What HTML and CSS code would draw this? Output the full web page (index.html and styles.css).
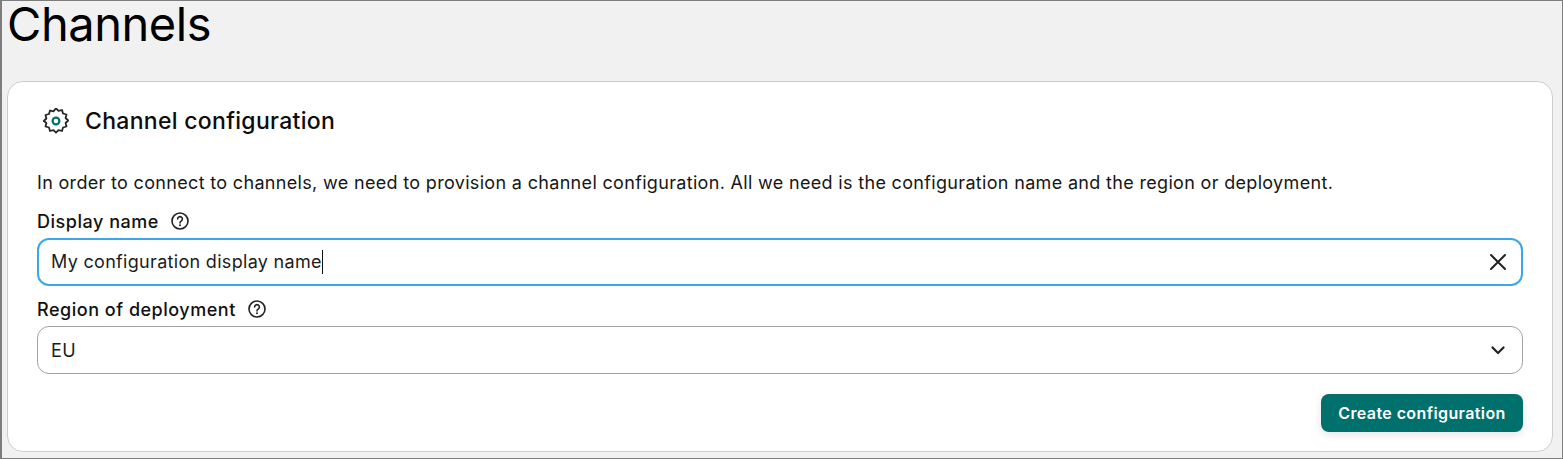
FILE: index.html
```html
<!DOCTYPE html>
<html lang="en">
<head>
    <meta charset="UTF-8">
    <meta name="viewport" content="width=device-width, initial-scale=1.0">
    <title>Channels</title>
    <link rel="stylesheet" href="styles.css">
</head>
<body>
    <div class="page">
        <h1 class="page-title">Channels</h1>

        <div class="card">
            <!-- Card header -->
            <div class="card-header">
                <svg class="gear-icon" viewBox="0 0 26 26" width="26" height="26" fill="none">
                    <path d="M13 1.6l2.5 2.6 3.5-.9 1 3.5 3.5 1-.9 3.5 2.6 2.5-2.6 2.5.9 3.500-3.500 1-1 3.500-3.500-.9-2.500 2.600-2.500-2.600-3.500.9-1-3.500-3.500-1 .9-3.500L.8 14.300l2.600-2.500-.9-3.500 3.500-1 1-3.500 3.500.9z" transform="translate(0 -1.300)" stroke="#262626" stroke-width="1.800" stroke-linejoin="round"/>
                    <circle cx="13" cy="13" r="3.400" stroke="#00706c" stroke-width="2.200"/>
                </svg>
                <h2 class="card-title">Channel configuration</h2>
            </div>

            <p class="intro">In order to connect to channels, we need to provision a channel configuration. All we need is the configuration name and the region or deployment.</p>

            <!-- Display name -->
            <div class="label-row">
                <span class="label">Display name</span>
                <svg class="help-icon" viewBox="0 0 18 18" width="18" height="18" fill="none">
                    <circle cx="9" cy="9" r="8" stroke="#222" stroke-width="1.600"/>
                    <path d="M6.600 7a2.400 2.400 0 1 1 3.600 2.100c-.8.500-1.200.9-1.200 1.800" stroke="#222" stroke-width="1.600" stroke-linecap="round"/>
                    <circle cx="9" cy="13.300" r="1" fill="#222"/>
                </svg>
            </div>
            <div class="field field-focus">
                <span class="field-value">My configuration display name</span><span class="caret"></span>
                <svg class="field-icon close-icon" viewBox="0 0 16 16" width="16" height="16" fill="none">
                    <path d="M1 1l14 14M15 1L1 15" stroke="#222" stroke-width="2" stroke-linecap="round"/>
                </svg>
            </div>

            <!-- Region -->
            <div class="label-row">
                <span class="label">Region of deployment</span>
                <svg class="help-icon" viewBox="0 0 18 18" width="18" height="18" fill="none">
                    <circle cx="9" cy="9" r="8" stroke="#222" stroke-width="1.600"/>
                    <path d="M6.600 7a2.400 2.400 0 1 1 3.600 2.100c-.8.500-1.200.9-1.200 1.800" stroke="#222" stroke-width="1.600" stroke-linecap="round"/>
                    <circle cx="9" cy="13.300" r="1" fill="#222"/>
                </svg>
            </div>
            <div class="field">
                <span class="field-value">EU</span>
                <svg class="field-icon" viewBox="0 0 14 9" width="14" height="9" fill="none">
                    <path d="M1.500 1.500L7 7l5.500-5.500" stroke="#222" stroke-width="2.200" stroke-linecap="round" stroke-linejoin="round"/>
                </svg>
            </div>

            <div class="actions">
                <button class="btn-primary">Create configuration</button>
            </div>
        </div>
    </div>
</body>
</html>
```

FILE: styles.css
```css
html, body {
    margin: 0;
    padding: 0;
}
body {
    font-family: Inter, "Liberation Sans", sans-serif;
    color: #111;
    background: #f1f1f1;
}
.page {
    box-sizing: border-box;
    width: 1563px;
    height: 459px;
    overflow: hidden;
    background: #f1f1f1;
    border: 1px solid #7d7d7d;
    border-left-width: 2px;
    padding: 0 9px 0 5px;
}
.page-title {
    margin: 0;
    height: 80px;
    font-size: 47px;
    font-weight: 400;
    line-height: 46px;
    letter-spacing: -0.45px;
    color: #000;
}
.card {
    box-sizing: border-box;
    height: 371px;
    background: #fff;
    border: 1px solid #cdcdcd;
    border-radius: 16px;
    padding: 0 29px;
}
.card-header {
    display: flex;
    align-items: center;
    gap: 16px;
    height: 78px;
    padding-left: 6px;
}
.card-title {
    margin: 0;
    font-size: 23px;
    font-weight: 500;
    letter-spacing: 0.3px;
    color: #0c0c0c;
}
.intro {
    margin: 0;
    height: 46px;
    padding-top: 11px;
    box-sizing: border-box;
    font-size: 18px;
    line-height: 24px;
    letter-spacing: 0.325px;
    color: #161616;
}
.label-row {
    box-sizing: border-box;
    display: flex;
    align-items: center;
    gap: 12px;
    height: 32px;
    padding-bottom: 2px;
}
.label {
    font-size: 18px;
    font-weight: 500;
    letter-spacing: 0.52px;
}
.field {
    box-sizing: border-box;
    display: flex;
    align-items: center;
    height: 48px;
    padding: 0 17px 0 13px;
    border: 1px solid #a3a3a3;
    border-radius: 12px;
    font-size: 18px;
    letter-spacing: 0.31px;
    color: #1c1c1c;
    margin-bottom: 8px;
}
.field-focus {
    border: 2px solid #3ba7e6;
    padding: 0 15px 0 12px;
}
.field-focus .field-value {
    padding-bottom: 1px;
}
.caret {
    width: 1px;
    height: 24px;
    background: #111;
}
.field-icon {
    margin-left: auto;
}
.actions {
    display: flex;
    justify-content: flex-end;
    padding-top: 12px;
}
.btn-primary {
    box-sizing: border-box;
    width: 202px;
    height: 38px;
    border: 0;
    border-radius: 8px;
    background: #00706c;
    color: #fff;
    font-family: inherit;
    font-size: 16px;
    font-weight: 600;
    letter-spacing: 0.4px;
    box-shadow: 0 3px 8px rgba(0, 0, 0, 0.1);
}
```
